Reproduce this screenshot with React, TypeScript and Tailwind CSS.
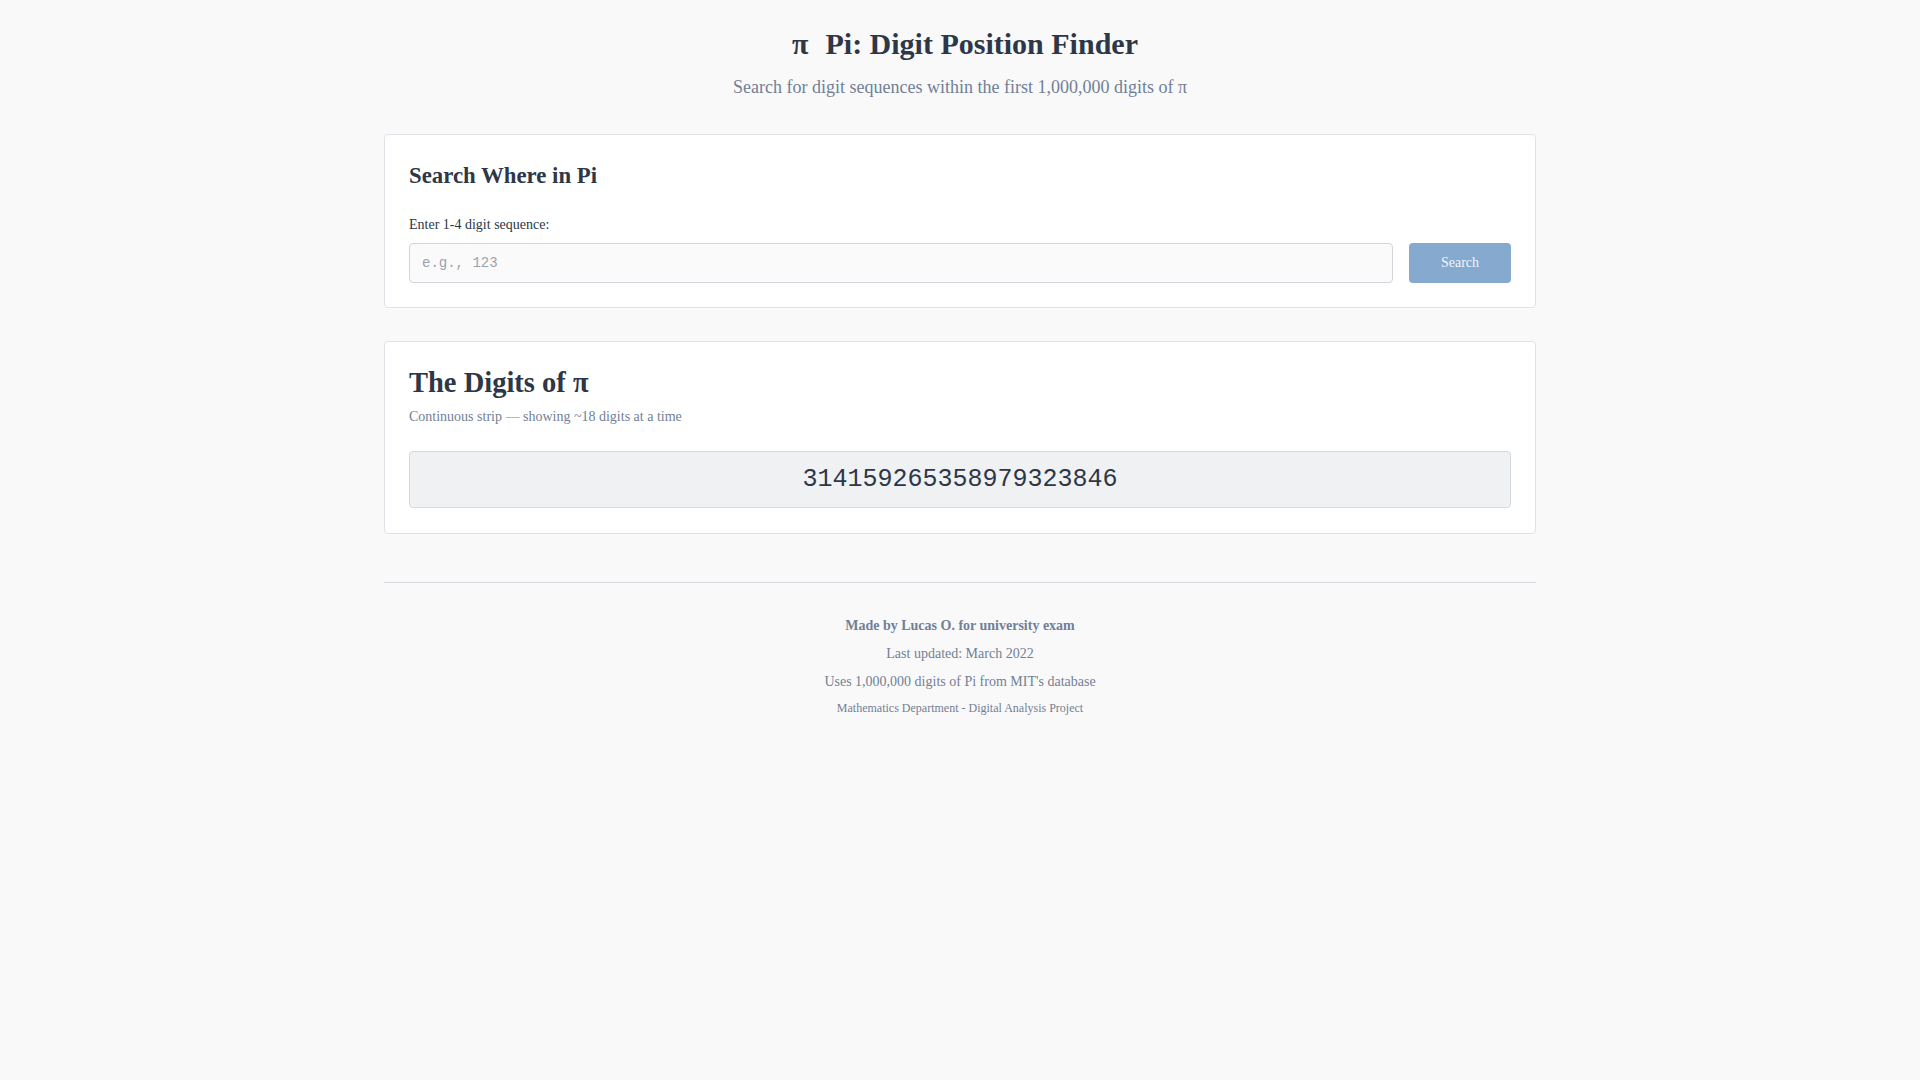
import React from "react";

const DIGITS = "314159265358979323846";

export default function App() {
  const [query, setQuery] = React.useState("");

  return (
    <div className="min-h-screen bg-[#f9f9f9] font-['Liberation_Serif',serif] text-[#2d3748]">
      <div className="mx-auto max-w-[1152px] pt-[26px] pb-10">
        {/* header */}
        <header className="mb-[33px] text-center">
          <h1 className="pl-[10px] text-[30px] leading-9 font-bold">
            <span className="mr-[17px]">π</span>Pi: Digit Position Finder
          </h1>
          <p className="mt-3 text-lg leading-[27px] text-[#718096]">
            Search for digit sequences within the first 1,000,000 digits of π
          </p>
        </header>

        {/* search card */}
        <section className="mb-[33px] rounded border border-[#dfe3e8] bg-white px-6 pt-[25px] pb-6">
          <h2 className="mb-[23px] text-[22.8px] leading-8 font-bold">Search Where in Pi</h2>
          <label className="mb-[8px] block text-sm leading-5 text-[#2d3748]">
            Enter 1-4 digit sequence:
          </label>
          <div className="flex gap-4">
            <input
              value={query}
              onChange={(e) => setQuery(e.target.value.replace(/\D/g, "").slice(0, 4))}
              placeholder="e.g., 123"
              className="h-10 flex-1 rounded border border-[#d1d5db] bg-[#fafafa] px-3 font-['Liberation_Mono',monospace] text-sm text-[#2d3748] outline-none placeholder:text-[#9aa3b0]"
            />
            <button
              disabled={query.length === 0}
              className="h-10 w-[102px] rounded bg-[#85a9cf] text-sm text-[#f1f5fa]"
            >
              Search
            </button>
          </div>
        </section>

        {/* digits card */}
        <section className="rounded border border-[#dfe3e8] bg-white px-6 pt-[23px] pb-[25px]">
          <h2 className="text-[28.5px] leading-9 font-bold">The Digits of π</h2>
          <p className="mt-[6px] text-sm leading-5 text-[#718096]">
            Continuous strip — showing ~18 digits at a time
          </p>
          <div className="mt-6 flex h-[57px] items-center justify-center rounded border border-[#d5d9df] bg-[#f0f1f3] font-['Liberation_Mono',monospace] text-[25px] text-[#2d3748]">
            {DIGITS}
          </div>
        </section>

        <hr className="mt-12 border-[#d5d9df]" />

        {/* footer */}
        <footer className="space-y-2 pt-[33px] text-center text-sm leading-5 text-[#718096]">
          <p className="font-bold">Made by Lucas O. for university exam</p>
          <p>Last updated: March 2022</p>
          <p>Uses 1,000,000 digits of Pi from MIT's database</p>
          <p className="text-xs leading-4">Mathematics Department - Digital Analysis Project</p>
        </footer>
      </div>
    </div>
  );
}
